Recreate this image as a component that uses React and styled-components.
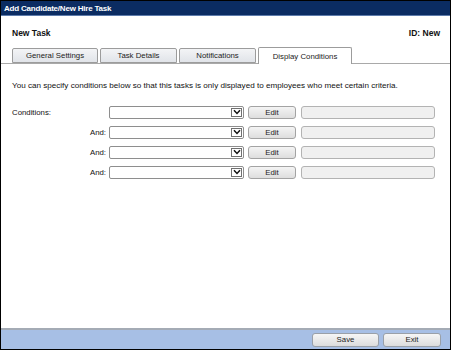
import styled, { createGlobalStyle } from 'styled-components'

const Global = createGlobalStyle`
  html, body { margin: 0; padding: 0; background: #fff; }
  * { box-sizing: border-box; }
`

const Window = styled.div`
  width: 451px;
  height: 350px;
  border: 1px solid #000;
  display: flex;
  flex-direction: column;
  font-family: "Liberation Sans", Arial, sans-serif;
  font-size: 8px;
  color: #111;
  background: #fff;
`

const TitleBar = styled.div`
  height: 15px;
  background: #0b2c62;
  border-bottom: 1px solid #5d7bab;
  color: #fff;
  font-weight: bold;
  font-size: 8px;
  letter-spacing: -0.2px;
  padding-left: 3px;
  display: flex;
  align-items: center;
`

const Header = styled.div`
  display: flex;
  justify-content: space-between;
  align-items: center;
  padding: 0 10px 0 11px;
  margin-top: 10px;
  height: 14px;
  font-weight: bold;
  font-size: 8.5px;
`

const TabStrip = styled.div`
  display: flex;
  align-items: flex-end;
  gap: 2px;
  padding-left: 11px;
  margin-top: 7px;
  height: 17px;
  border-bottom: 1px solid #a9a9a9;
`

const Tab = styled.div`
  width: ${p => p.$w}px;
  height: ${p => (p.$active ? 17 : 15)}px;
  margin-bottom: ${p => (p.$active ? -1 : 0)}px;
  border: 1px solid #9c9c9c;
  border-bottom: ${p => (p.$active ? 'none' : '1px solid #9c9c9c')};
  border-radius: 2px 2px 0 0;
  background: ${p => (p.$active ? '#fff' : 'linear-gradient(#f3f4f6, #e1e4e9)')};
  display: flex;
  align-items: center;
  justify-content: center;
  font-size: 7.8px;
  color: #222;
`

const Body = styled.div`
  flex: 1;
  padding: 17px 0 0 11px;
`

const Intro = styled.p`
  margin: 0;
  font-size: 8.1px;
  line-height: 10px;
`

const Rows = styled.div`
  display: flex;
  flex-direction: column;
  gap: 6px;
  margin-top: 14px;
`

const Row = styled.div`
  display: flex;
  align-items: center;
  height: 14px;
`

const Label = styled.div`
  width: 94px;
  margin-right: 3px;
  text-align: ${p => (p.$right ? 'right' : 'left')};
  font-size: 7.8px;
`

const Select = styled.div`
  width: 135px;
  height: 13px;
  border: 1px solid #8e8e8e;
  border-radius: 2px;
  background: #fff;
  display: flex;
  justify-content: flex-end;
  padding: 1px;
`

const Arrow = styled.div`
  width: 11px;
  height: 100%;
  border: 1px solid #707070;
  background: #fff;
  display: flex;
  align-items: center;
  justify-content: center;
`

const EditButton = styled.div`
  width: 48px;
  height: 13px;
  margin-left: 4px;
  border: 1px solid #a3a3a3;
  border-radius: 3px;
  background: linear-gradient(#f4f4f4, #dedede);
  display: flex;
  align-items: center;
  justify-content: center;
  font-size: 7.8px;
  color: #222;
`

const Field = styled.div`
  width: 134px;
  height: 13px;
  margin-left: 5px;
  border: 1px solid #b3b3b3;
  border-radius: 3px;
  background: #f0f0f0;
`

const Footer = styled.div`
  height: 21px;
  border-top: 2px solid #a4abb5;
  background: #a7bfe5;
  display: flex;
  justify-content: flex-end;
  align-items: center;
  gap: 4px;
  padding-right: 9px;
`

const FooterButton = styled.div`
  width: ${p => p.$w}px;
  height: 14px;
  border: 1px solid #9aa0a8;
  border-radius: 3px;
  background: linear-gradient(#f6f6f6, #dcdcdc);
  display: flex;
  align-items: center;
  justify-content: center;
  font-size: 7.8px;
  color: #222;
`

const Chevron = () => (
  <svg width="8" height="6" viewBox="0 0 8 6">
    <path d="M1 1.2 L4 4.4 L7 1.2" fill="none" stroke="#111" strokeWidth="1.5" />
  </svg>
)

const tabs = [
  { label: 'General Settings', w: 86 },
  { label: 'Task Details', w: 77 },
  { label: 'Notifications', w: 77 },
  { label: 'Display Conditions', w: 94, active: true },
]

const rows = ['Conditions:', 'And:', 'And:', 'And:']

export default function App() {
  return (
    <>
      <Global />
      <Window>
        <TitleBar>Add Candidate/New Hire Task</TitleBar>
        <Header>
          <span>New Task</span>
          <span>ID: New</span>
        </Header>
        <TabStrip>
          {tabs.map(t => (
            <Tab key={t.label} $w={t.w} $active={t.active}>{t.label}</Tab>
          ))}
        </TabStrip>
        <Body>
          <Intro>
            You can specify conditions below so that this tasks is only displayed to employees who meet certain criteria.
          </Intro>
          <Rows>
            {rows.map((r, i) => (
              <Row key={i}>
                <Label $right={i > 0}>{r}</Label>
                <Select>
                  <Arrow><Chevron /></Arrow>
                </Select>
                <EditButton>Edit</EditButton>
                <Field />
              </Row>
            ))}
          </Rows>
        </Body>
        <Footer>
          <FooterButton $w={67}>Save</FooterButton>
          <FooterButton $w={58}>Exit</FooterButton>
        </Footer>
      </Window>
    </>
  )
}
